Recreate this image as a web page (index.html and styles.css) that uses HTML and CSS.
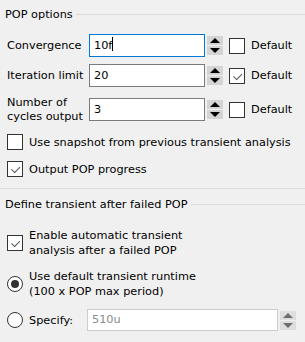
FILE: index.html
```html
<!DOCTYPE html>
<html lang="en">
<head>
  <meta charset="UTF-8">
  <title>POP options</title>
  <link rel="stylesheet" href="styles.css">
</head>
<body>
  <div class="dialog">
    <div class="group-title"><span>POP options</span><span class="rule"></span></div>

    <div class="field-row row-1">
      <div class="field-label">Convergence</div>
      <div class="spin-field">
        <div class="text-box focused">10f<span class="caret"></span></div>
        <div class="spin"><span class="spin-btn up"></span><span class="spin-btn down"></span></div>
      </div>
      <div class="check"><span class="box"></span>Default</div>
    </div>

    <div class="field-row row-2">
      <div class="field-label">Iteration limit</div>
      <div class="spin-field">
        <div class="text-box">20</div>
        <div class="spin"><span class="spin-btn up"></span><span class="spin-btn down"></span></div>
      </div>
      <div class="check"><span class="box checked"></span>Default</div>
    </div>

    <div class="field-row row-3">
      <div class="field-label">Number of<br>cycles output</div>
      <div class="spin-field">
        <div class="text-box">3</div>
        <div class="spin"><span class="spin-btn up"></span><span class="spin-btn down"></span></div>
      </div>
      <div class="check"><span class="box"></span>Default</div>
    </div>

    <div class="check line-check snapshot"><span class="box"></span>Use snapshot from previous transient analysis</div>
    <div class="check line-check progress"><span class="box checked"></span>Output POP progress</div>

    <div class="separator"></div>

    <div class="group-title second"><span>Define transient after failed POP</span><span class="rule"></span></div>

    <div class="check line-check enable"><span class="box checked"></span><span>Enable automatic transient<br>analysis after a failed POP</span></div>

    <div class="radio default-run"><span class="dot selected"></span><span>Use default transient runtime<br>(100 x POP max period)</span></div>

    <div class="radio specify">
      <span class="dot"></span><span class="specify-label">Specify:</span>
      <div class="spin-field">
        <div class="text-box disabled">510u</div>
        <div class="spin disabled"><span class="spin-btn up"></span><span class="spin-btn down"></span></div>
      </div>
    </div>
  </div>
</body>
</html>
```

FILE: styles.css
```css
body {
  margin: 0;
  background: #f0f0f0;
  font-family: "DejaVu Sans", Verdana, sans-serif;
  font-size: 11.3px;
  line-height: 15px;
  color: #000;
}
.dialog {
  width: 305px;
  height: 342px;
  overflow: hidden;
}
.group-title {
  display: flex;
  align-items: center;
  gap: 3px;
  padding-left: 5px;
  height: 14px;
  margin-top: 7px;
}
.group-title .rule {
  flex: 1;
  height: 1px;
  background: #dcdcdc;
}
.group-title.second {
  margin-top: 8px;
}
.field-row {
  display: flex;
  align-items: center;
  padding-left: 7px;
}
.row-1 { margin-top: 13px; }
.row-2 { margin-top: 7px; }
.row-3 { margin-top: 6px; height: 33px; }
.field-label {
  width: 82px;
  line-height: 14px;
}
.spin-field {
  display: flex;
  align-items: center;
  gap: 2px;
}
.text-box {
  box-sizing: border-box;
  width: 116px;
  height: 23px;
  border: 1px solid #7a7a7a;
  background: #fff;
  padding-left: 4px;
  line-height: 21px;
}
.text-box.focused {
  border-color: #0078d7;
}
.text-box.disabled {
  border-color: #cccccc;
  color: #8a8a8a;
  width: 191px;
  height: 22px;
  line-height: 20px;
}
.caret {
  display: inline-block;
  width: 1px;
  height: 14px;
  background: #000;
  vertical-align: -2px;
}
.spin {
  display: flex;
  flex-direction: column;
  gap: 1px;
}
.spin-btn {
  display: block;
  width: 16px;
  height: 9px;
  background: #d4d4d4;
  position: relative;
}
.spin-btn::after {
  content: "";
  position: absolute;
  left: 3px;
  top: 2px;
  border-left: 5px solid transparent;
  border-right: 5px solid transparent;
}
.spin-btn.up::after {
  border-bottom: 5px solid #000;
}
.spin-btn.down::after {
  border-top: 5px solid #000;
}
.spin.disabled .spin-btn {
  background: #dedede;
}
.spin.disabled .spin-btn.up::after { border-bottom-color: #6e6e6e; }
.spin.disabled .spin-btn.down::after { border-top-color: #6e6e6e; }
.check {
  display: flex;
  align-items: center;
  gap: 6px;
}
.field-row .check {
  margin-left: 6px;
}
.box {
  box-sizing: border-box;
  width: 16px;
  height: 16px;
  border: 1px solid #333;
  background: #fff;
  flex: none;
  position: relative;
}
.box.checked::after {
  content: "";
  position: absolute;
  left: 3px;
  top: 2px;
  width: 7px;
  height: 4px;
  border-left: 1px solid #555;
  border-bottom: 1px solid #555;
  transform: rotate(-45deg) translate(-1px, 2px);
}
.line-check {
  padding-left: 7px;
}
.snapshot { margin-top: 8px; }
.progress { margin-top: 11px; }
.separator {
  height: 1px;
  background: #dcdcdc;
  margin-top: 11px;
}
.enable {
  margin-top: 17px;
}
.radio {
  display: flex;
  align-items: center;
  gap: 6px;
  padding-left: 7px;
}
.default-run { margin-top: 11px; }
.specify { margin-top: 10px; height: 22px; }
.dot {
  box-sizing: border-box;
  width: 16px;
  height: 16px;
  border: 1px solid #333;
  border-radius: 50%;
  background: #fff;
  flex: none;
  position: relative;
}
.dot.selected::after {
  content: "";
  position: absolute;
  left: 3px;
  top: 3px;
  width: 8px;
  height: 8px;
  border-radius: 50%;
  background: #333;
}
.specify-label {
  width: 52px;
}
```
